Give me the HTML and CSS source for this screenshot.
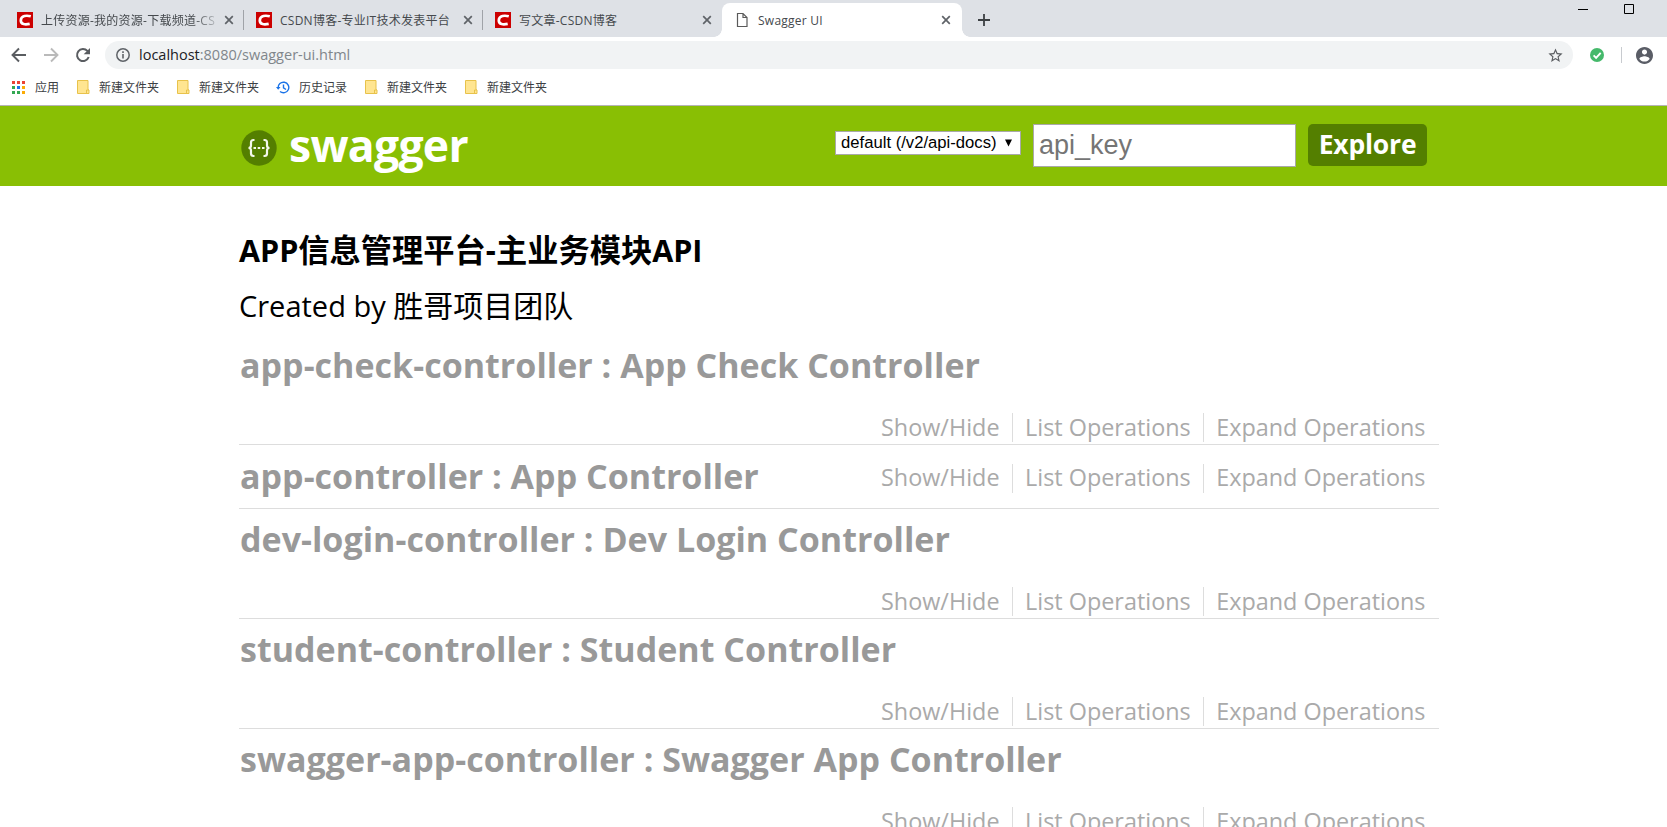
FILE: index.html
```html
<!DOCTYPE html>
<html lang="zh-CN">

<head>
    <meta charset="UTF-8">
    <title>Swagger UI</title>
    <link rel="stylesheet" href="styles.css">
</head>

<body>
    <!-- icons used more than once -->
    <svg class="defs" width="0" height="0">
        <symbol id="csdn" viewBox="0 0 16 16">
            <rect width="16" height="16" fill="#c00" />
            <path d="M13.800 4.300C10 3.300 4 3.300 3.800 8.200 3.600 12.700 8.500 12.700 12.700 11.900" fill="none" stroke="#fff" stroke-width="2.700" />
        </symbol>
        <symbol id="close" viewBox="0 0 10 10">
            <path d="M1.200 1.200l7.600 7.600M8.800 1.200L1.200 8.800" stroke="#5f6368" stroke-width="1.700" />
        </symbol>
        <symbol id="folder" viewBox="0 0 13 14">
            <path d="M.5.500h10.500v9l1 .5v3.500H.500z" fill="#ffe591" stroke="#e8c24a" />
            <path d="M9.500 13.500v-3.500h2" fill="none" stroke="#e8c24a" />
        </symbol>
    </svg>

    <div class="tabs">
        <div class="tab">
            <svg class="favicon"><use href="#csdn" /></svg>
            <span class="tab-title fade">上传资源-我的资源-下载频道-CS</span>
            <svg class="close"><use href="#close" /></svg>
        </div>
        <div class="tab">
            <svg class="favicon"><use href="#csdn" /></svg>
            <span class="tab-title">CSDN博客-专业IT技术发表平台</span>
            <svg class="close"><use href="#close" /></svg>
        </div>
        <div class="tab last">
            <svg class="favicon"><use href="#csdn" /></svg>
            <span class="tab-title">写文章-CSDN博客</span>
            <svg class="close"><use href="#close" /></svg>
        </div>
        <div class="tab active">
            <svg class="favicon" viewBox="0 0 16 16"><path d="M3.500 1.500h5.500l4 4v9h-9.500zM9 1.500v4h4" fill="none" stroke="#5a5a5a" stroke-width="1.200" /></svg>
            <span class="tab-title">Swagger UI</span>
            <svg class="close"><use href="#close" /></svg>
        </div>
        <svg class="plus" viewBox="0 0 12 12"><path d="M6 0v12M0 6h12" stroke="#3c4043" stroke-width="1.800" /></svg>
        <div class="window-buttons">
            <svg width="56" height="12" viewBox="0 0 56 12"><path d="M0 6.500h10M46.500 1.500h9v9h-9z" fill="none" stroke="#000" /></svg>
        </div>
    </div>

    <div class="toolbar">
        <svg class="nav" viewBox="0 0 16 16"><path d="M15 8H2M8 1.500L1.500 8 8 14.500" fill="none" stroke="#5a5d61" stroke-width="1.900" /></svg>
        <svg class="nav" viewBox="0 0 16 16"><path d="M1 8h13M8 1.500L14.500 8 8 14.500" fill="none" stroke="#bababa" stroke-width="1.900" /></svg>
        <svg class="nav" viewBox="0 0 16 16"><path d="M13.700 10A6 6 0 1 1 12.400 3.900L14 5.500" fill="none" stroke="#5a5d61" stroke-width="2" /><path d="M15 1v6.300H8.700z" fill="#5a5d61" /></svg>
        <div class="address">
            <svg class="info" viewBox="0 0 14 14"><circle cx="7" cy="7" r="6.200" fill="none" stroke="#5f6368" stroke-width="1.500" /><path d="M7 6v4.500M7 3.300v1.600" stroke="#5f6368" stroke-width="1.600" /></svg>
            <span class="url"><b>localhost</b>:8080/swagger-ui.html</span>
            <svg class="star" viewBox="0 0 24 24"><path fill="#5a5d61" d="M22 9.240l-7.190-.62L12 2 9.190 8.630 2 9.240l5.460 4.730L5.820 21 12 17.270 18.180 21l-1.630-7.030L22 9.240zM12 15.400l-3.760 2.270 1-4.280-3.320-2.880 4.380-.38L12 6.100l1.710 4.040 4.380.38-3.320 2.880 1 4.280L12 15.400z" /></svg>
        </div>
        <svg class="check" viewBox="0 0 14 14"><circle cx="7" cy="7" r="7" fill="#45b96b" /><path d="M3.600 7.300l2.500 2.500 4.600-5" fill="none" stroke="#fff" stroke-width="1.900" /></svg>
        <span class="bar"></span>
        <svg class="avatar" viewBox="2 2 20 20"><path fill="#5a5d66" d="M12 2C6.480 2 2 6.480 2 12s4.480 10 10 10 10-4.480 10-10S17.520 2 12 2zm0 3c1.660 0 3 1.340 3 3s-1.340 3-3 3-3-1.340-3-3 1.340-3 3-3zm0 14.200c-2.500 0-4.710-1.280-6-3.220.03-1.990 4-3.080 6-3.080 1.990 0 5.970 1.090 6 3.080-1.290 1.940-3.500 3.220-6 3.220z" /></svg>
    </div>

    <div class="bookmarks">
        <div class="bookmark apps">
            <svg class="grid" viewBox="0 0 13 13">
                <path d="M0 0h3v3H0zM5 0h3v3H5zM10 0h3v3h-3z" fill="#ea4335" />
                <path d="M0 5h3v3H0zM0 10h3v3H0z" fill="#34a853" />
                <path d="M5 5h3v3H5z" fill="#1a73e8" />
                <path d="M5 10h3v3H5z" fill="#34a853" />
                <path d="M10 5h3v3h-3zM10 10h3v3h-3z" fill="#fbab05" />
            </svg>
            应用
        </div>
        <div class="bookmark"><svg class="folder"><use href="#folder" /></svg>新建文件夹</div>
        <div class="bookmark"><svg class="folder"><use href="#folder" /></svg>新建文件夹</div>
        <div class="bookmark history">
            <svg class="clock" viewBox="0 0 14 13"><path d="M2.200 7A5.300 5.300 0 1 1 4 10.500M7.500 3.500v3.300l2.500 1.700" fill="none" stroke="#1a73e8" stroke-width="1.400" /><path d="M0 6h4.500L2.200 8.700z" fill="#1a73e8" /></svg>
            历史记录
        </div>
        <div class="bookmark"><svg class="folder"><use href="#folder" /></svg>新建文件夹</div>
        <div class="bookmark"><svg class="folder"><use href="#folder" /></svg>新建文件夹</div>
    </div>

    <div class="header">
        <div class="logo">
            <svg class="logo-icon" viewBox="0 0 36 36">
                <circle cx="18" cy="18" r="17.700" fill="#547f00" />
                <path d="M13.500 10h-1q-2.500 0-2.500 2.500v3q0 2.500-2.500 2.500 2.500 0 2.500 2.500v3q0 2.500 2.500 2.500h1M22.500 10h1q2.500 0 2.500 2.500v3q0 2.500 2.500 2.500-2.500 0-2.500 2.500v3q0 2.500-2.500 2.500h-1" fill="none" stroke="#f4f8ec" stroke-width="2.200" />
                <path d="M12.500 17h2.500v2h-2.500zM16.700 17h2.500v2h-2.500zM21 17h2.500v2h-2.500z" fill="#f4f8ec" />
            </svg>
            <span class="logo-title">swagger</span>
        </div>
        <div class="select">default (/v2/api-docs)<svg class="caret" viewBox="0 0 8 8"><path d="M0 0h8L4 8z" /></svg></div>
        <input class="api-key" type="text" placeholder="api_key">
        <a class="explore">Explore</a>
    </div>

    <div class="content">
        <h1 class="title"><span class="latin">APP</span>信息管理平台-主业务模块<span class="latin">API</span></h1>
        <div class="author"><span class="latin">Created by </span>胜哥项目团队</div>

        <div class="resource">
            <h2>app-check-controller : App Check Controller</h2>
            <ul class="options"><li>Show/Hide</li><li>List Operations</li><li>Expand Operations</li></ul>
        </div>
        <div class="resource short">
            <h2>app-controller : App Controller</h2>
            <ul class="options"><li>Show/Hide</li><li>List Operations</li><li>Expand Operations</li></ul>
        </div>
        <div class="resource">
            <h2>dev-login-controller : Dev Login Controller</h2>
            <ul class="options"><li>Show/Hide</li><li>List Operations</li><li>Expand Operations</li></ul>
        </div>
        <div class="resource">
            <h2>student-controller : Student Controller</h2>
            <ul class="options"><li>Show/Hide</li><li>List Operations</li><li>Expand Operations</li></ul>
        </div>
        <div class="resource">
            <h2>swagger-app-controller : Swagger App Controller</h2>
            <ul class="options"><li>Show/Hide</li><li>List Operations</li><li>Expand Operations</li></ul>
        </div>
    </div>
</body>

</html>
```

FILE: styles.css
```css
* {
    box-sizing: border-box;
}

body {
    margin: 0;
    height: 827px;
    overflow: hidden;
    background-color: white;
    font-family: "Open Sans", "Noto Sans CJK SC", sans-serif;
}

svg {
    display: block;
    flex: none;
}

.defs {
    display: none;
}

/* browser tabs */
.tabs {
    display: flex;
    height: 37px;
    padding: 3px 33px 0 5px;
    background-color: #dee1e6;
    font-size: 12px;
    letter-spacing: 0.25px;
    color: #45494d;
}

.tab {
    display: flex;
    align-items: center;
    width: 239px;
    height: 34px;
    padding: 0 10px 0 12px;
    background: linear-gradient(#a0a3a8, #a0a3a8) no-repeat 100% 7px / 1px 20px;
}

.tab.last {
    background: none;
}

.tab.active {
    position: relative;
    width: 240px;
    background: white;
    border-radius: 8px 8px 0 0;
    padding-right: 11px;
}

/* curved feet of the active tab */
.tab.active::before,
.tab.active::after {
    content: "";
    position: absolute;
    bottom: 0;
    width: 8px;
    height: 8px;
}

.tab.active::before {
    left: -8px;
    background: radial-gradient(circle at 0 0, transparent 7.5px, white 8px);
}

.tab.active::after {
    right: -8px;
    background: radial-gradient(circle at 100% 0, transparent 7.5px, white 8px);
}

.favicon {
    width: 16px;
    height: 16px;
}

.tab-title {
    width: 177px;
    margin-left: 8px;
    white-space: nowrap;
}

.fade {
    -webkit-mask-image: linear-gradient(to right, black 152px, transparent 182px);
    mask-image: linear-gradient(to right, black 152px, transparent 182px);
}

.close {
    width: 10px;
    height: 10px;
    margin-left: auto;
}

.plus {
    width: 12px;
    height: 12px;
    margin: 11px 0 0 16px;
}

.window-buttons {
    margin-left: auto;
}

/* address bar */
.toolbar {
    display: flex;
    align-items: center;
    height: 36px;
    padding: 0 14px 0 11px;
}

.nav {
    width: 16px;
    height: 16px;
    margin-right: 16px;
}

.address {
    display: flex;
    align-items: center;
    width: 1468px;
    height: 28px;
    margin-left: -2px;
    padding: 0 9px 0 11px;
    border-radius: 14px;
    background-color: #f1f3f4;
}

.info {
    width: 14px;
    height: 14px;
}

.url {
    margin: 0 0 2px 9px;
    font-size: 14.5px;
    color: #80868b;
}

.url b {
    font-weight: normal;
    color: #202124;
}

.star {
    width: 17px;
    height: 17px;
    margin-left: auto;
}

.check {
    width: 14px;
    height: 14px;
    margin-left: 17px;
}

.bar {
    width: 1px;
    height: 16px;
    margin-left: 17px;
    background-color: #c8cbcf;
}

.avatar {
    width: 17px;
    height: 17px;
    margin-left: auto;
}

.bookmarks {
    display: flex;
    gap: 18px;
    height: 33px;
    padding: 0 12px 4px;
    border-bottom: 1px solid #b6b4b6;
    font-size: 12px;
    color: #3c4043;
}

.bookmark {
    display: flex;
    align-items: center;
}

.folder {
    width: 13px;
    height: 14px;
    margin-right: 9px;
}

.grid {
    width: 13px;
    height: 13px;
    margin-right: 10px;
}

.clock {
    width: 14px;
    height: 13px;
    margin: 0 9px 0 -1px;
}

/* swagger header */
.header {
    display: flex;
    align-items: flex-start;
    height: 80px;
    padding: 18px 240px 0 241px;
    background-color: #89bf04;
}

.logo {
    display: flex;
    align-items: flex-start;
    margin-right: auto;
}

.logo-icon {
    width: 36px;
    height: 36px;
    margin-top: 6px;
}

.logo-title {
    margin-left: 12px;
    font-size: 44.5px;
    line-height: 42px;
    font-weight: bold;
    letter-spacing: -0.7px;
    color: white;
}

.select {
    display: flex;
    align-items: center;
    width: 186px;
    height: 24px;
    margin: 7px 12px 0 0;
    padding-left: 5px;
    border: 1px solid #a9a9a9;
    background-color: white;
    font-family: "Liberation Sans", Arial, sans-serif;
    font-size: 16.67px;
}

.caret {
    width: 7px;
    height: 8px;
    margin-left: 8px;
}

.api-key {
    width: 263px;
    height: 43px;
    margin-right: 12px;
    padding: 0 5px;
    border: 1px solid #a9a9a9;
    font-family: "Liberation Sans", Arial, sans-serif;
    font-size: 27px;
}

.api-key::placeholder {
    color: #757575;
}

.explore {
    width: 119px;
    height: 42px;
    border-radius: 5px;
    background-color: #547f00;
    color: white;
    font-size: 26.5px;
    line-height: 41px;
    font-weight: bold;
    letter-spacing: -0.2px;
    text-align: center;
}

/* api listing */
.content {
    width: 1200px;
    margin-left: 239px;
}

.title {
    height: 100px;
    margin: 0;
    padding-top: 42px;
    font-size: 31.25px;
    line-height: 44px;
}

.title .latin {
    font-size: 30.5px;
}

.author {
    height: 49px;
    font-size: 30px;
    line-height: 40px;
}

.author .latin {
    font-size: 29px;
}

.resource {
    height: 110px;
    border-bottom: 1px solid #ddd;
}

.resource.short {
    display: flex;
    justify-content: space-between;
    height: 64px;
}

.resource h2 {
    margin: 0;
    padding: 6px 0 1px 1px;
    font-size: 34px;
    line-height: 48px;
    letter-spacing: 0.02px;
    color: #999;
}

.resource.short h2 {
    padding-top: 7px;
}

.options {
    display: flex;
    justify-content: flex-end;
    margin: 23px 0 0;
    padding: 0;
    list-style: none;
    font-size: 23.4px;
    line-height: 29px;
    color: #aaa;
}

.short .options {
    margin-top: 19px;
    line-height: 26px;
}

.options li {
    height: 29px;
    padding: 0 12.5px 0 12px;
    border-right: 1px solid #ddd;
}

.options li:last-child {
    padding-right: 13.5px;
    border-right: none;
}
```
